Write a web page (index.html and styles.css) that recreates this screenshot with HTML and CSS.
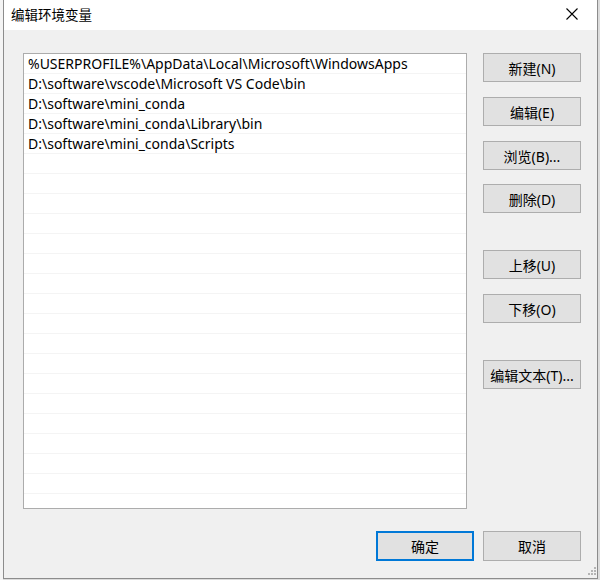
FILE: index.html
```html
<!DOCTYPE html>
<html lang="zh-CN">
<head>
    <meta charset="utf-8">
    <meta name="viewport" content="width=device-width, initial-scale=1.0">
    <title>编辑环境变量</title>
    <link rel="stylesheet" href="styles.css">
</head>
<body>
    <div class="desktop">
        <div class="backdrop"></div>
        <div class="dialog">
            <div class="titlebar">
                <span class="title">编辑环境变量</span>
                <span class="close">
                    <svg width="12" height="12" viewBox="0 0 12 12">
                        <path d="M0.5 0.5 L11.5 11.5 M11.5 0.5 L0.5 11.5" stroke="#000" stroke-width="1.1" fill="none"/>
                    </svg>
                </span>
            </div>
            <div class="content">
                <div class="main">
                    <div class="listbox">
                        <div class="item">%USERPROFILE%\AppData\Local\Microsoft\WindowsApps</div>
                        <div class="item">D:\software\vscode\Microsoft VS Code\bin</div>
                        <div class="item">D:\software\mini_conda</div>
                        <div class="item">D:\software\mini_conda\Library\bin</div>
                        <div class="item">D:\software\mini_conda\Scripts</div>
                    </div>
                    <div class="side">
                        <button class="btn">新建(N)</button>
                        <button class="btn">编辑(E)</button>
                        <button class="btn">浏览(B)...</button>
                        <button class="btn tight">删除(D)</button>
                        <button class="btn group">上移(U)</button>
                        <button class="btn">下移(O)</button>
                        <button class="btn group">编辑文本(T)...</button>
                    </div>
                </div>
                <div class="footer">
                    <button class="btn default">确定</button>
                    <button class="btn">取消</button>
                </div>
                <div class="grip">
                    <svg width="11" height="11" viewBox="0 0 11 11" fill="#b4b4b4">
                        <rect x="8" y="0" width="2" height="2"/>
                        <rect x="5" y="3" width="2" height="2"/>
                        <rect x="8" y="3" width="2" height="2"/>
                        <rect x="2" y="6" width="2" height="2"/>
                        <rect x="5" y="6" width="2" height="2"/>
                        <rect x="8" y="6" width="2" height="2"/>
                    </svg>
                </div>
            </div>
        </div>
    </div>
</body>
</html>
```

FILE: styles.css
```css
body {
    margin: 0;
    font-family: "Noto Sans", "Noto Sans CJK SC", sans-serif;
    background: #dcdcdc;
    overflow: hidden;
}
.desktop {
    display: flex;
    width: 600px;
    height: 580px;
}
.backdrop {
    width: 3px;
    background: #f4f4f4;
}
.dialog {
    display: flex;
    flex-direction: column;
    width: 593px;
    height: 578px;
    border: 1px solid #8c8c8c;
    border-top: none;
    background: #f0f0f0;
}
.titlebar {
    display: flex;
    align-items: center;
    justify-content: space-between;
    height: 30px;
    background: #fff;
    padding: 0 0 2px 7px;
    box-sizing: border-box;
}
.title {
    font-family: "Noto Sans CJK SC", sans-serif;
    font-size: 13.5px;
    color: #000;
}
.close {
    display: flex;
    width: 46px;
    height: 28px;
    align-items: center;
    justify-content: center;
    margin-right: 2px;
}
.content {
    position: relative;
    flex: 1;
    padding: 23px 16px 0 19px;
}
.main {
    display: flex;
    gap: 16px;
}
.listbox {
    width: 444px;
    height: 456px;
    box-sizing: border-box;
    border: 1px solid #acacac;
    padding-left: 4px;
    background: repeating-linear-gradient(#fff 0 19px, #f4f4f4 19px 20px);
}
.item {
    height: 20px;
    line-height: 19px;
    font-size: 14px;
    color: #000;
    white-space: nowrap;
}
.side {
    display: flex;
    flex-direction: column;
    width: 98px;
}
.btn {
    width: 98px;
    height: 29px;
    margin: 0;
    padding: 0;
    border: 1px solid #adadad;
    background: #e1e1e1;
    font-family: "Noto Sans", "Noto Sans CJK SC", sans-serif;
    font-size: 14px;
    color: #000;
}
.side .btn + .btn {
    margin-top: 15px;
}
.side .btn.tight {
    margin-top: 14px;
}
.side .btn.group {
    margin-top: 37px;
}
.footer {
    display: flex;
    justify-content: flex-end;
    gap: 9px;
    margin-top: 22px;
}
.footer .btn {
    height: 30px;
}
.btn.default {
    border-color: #0078d7;
    box-shadow: inset 0 0 0 1px #0078d7;
}
.grip {
    position: absolute;
    right: 0;
    bottom: 0;
    line-height: 0;
}
```
